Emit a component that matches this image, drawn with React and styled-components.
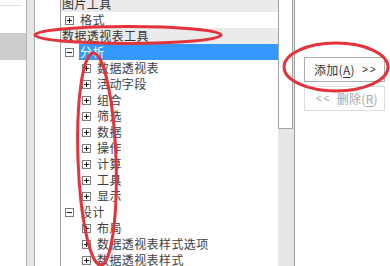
import styled, { createGlobalStyle } from 'styled-components';

const Global = createGlobalStyle`
  html, body {
    margin: 0;
    padding: 0;
    background: #ffffff;
  }
  body {
    font-family: "Noto Sans CJK SC", "Noto Sans", sans-serif;
    font-size: 12px;
  }
`;

const Page = styled.div`
  position: relative;
  width: 390px;
  height: 266px;
  overflow: hidden;
  display: flex;
  background: #fff;
`;

const LeftList = styled.div`
  width: 34px;
  height: 100%;
  display: flex;
  border-right: 1px solid #a9a9a9;
`;

const LeftItems = styled.div`
  width: 26px;
  display: flex;
  flex-direction: column;
`;

const LeftLine = styled.div`
  margin-top: 5px;
  width: 22px;
  height: 1px;
  background: #e2e2e2;
`;

const LeftSelected = styled.div`
  margin-top: 27px;
  height: 27px;
  background: #cccccc;
`;

const LeftScroll = styled.div`
  width: 7px;
  border-left: 1px solid #b4b4b4;
  background: #e6e6e6;
`;

const Gap = styled.div`
  width: 25px;
`;

const TreeBox = styled.div`
  width: 233px;
  height: 100%;
  display: flex;
  border-left: 1px solid #a0a0a0;
  border-right: 1px solid #a0a0a0;
`;

const Tree = styled.div`
  flex: 1;
  min-width: 0;
  margin-top: -4px;
  display: flex;
  flex-direction: column;
`;

const Row = styled.div`
  height: 16px;
  display: flex;
  align-items: center;
  padding-left: ${(p) => p.indent}px;
  background: ${(p) => (p.header ? '#ebebeb' : 'transparent')};
  color: ${(p) => (p.header ? '#333333' : '#404040')};
  white-space: nowrap;
  font-size: 12px;
  letter-spacing: 0.4px;
  line-height: 16px;
`;

const Label = styled.span`
  height: 16px;
  display: flex;
  align-items: center;
  padding-right: 4px;
  flex: ${(p) => (p.selected ? 1 : 'none')};
  background: ${(p) => (p.selected ? '#3399ff' : 'transparent')};
  color: ${(p) => (p.selected ? '#ffffff' : 'inherit')};
  padding-left: ${(p) => (p.selected ? 1 : 0)}px;
  margin-left: ${(p) => (p.selected ? -1 : 0)}px;
`;

const Toggle = styled.span`
  position: relative;
  width: 7px;
  height: 7px;
  border: 1px solid #7d7d7d;
  margin-right: 6px;
  flex: none;
  background: #fff;

  &::before {
    content: '';
    position: absolute;
    left: 1px;
    top: 3px;
    width: 5px;
    height: 1px;
    background: #1a1a1a;
  }

  &::after {
    content: '';
    display: ${(p) => (p.open ? 'none' : 'block')};
    position: absolute;
    left: 3px;
    top: 1px;
    width: 1px;
    height: 5px;
    background: #1a1a1a;
  }
`;

const Scrollbar = styled.div`
  width: 16px;
  display: flex;
  flex-direction: column;
  background: #e6e6e6;
`;

const Thumb = styled.div`
  height: 128px;
  margin: 0 1px 0 0;
  border: 1px solid #a5a5a5;
  border-top: none;
  background: #ffffff;
`;

const Side = styled.div`
  flex: 1;
  display: flex;
  flex-direction: column;
  gap: 4px;
  padding: 57px 0 0 9px;
`;

const Button = styled.div`
  height: 23px;
  display: flex;
  align-items: center;
  padding-left: ${(p) => p.pad}px;
  box-sizing: content-box;
  width: ${(p) => 79 - p.pad}px;
  border: 1px solid ${(p) => (p.disabled ? '#dcdcdc' : '#adadad')};
  background: ${(p) => (p.disabled ? '#ffffff' : '#fdfdfd')};
  color: ${(p) => (p.disabled ? '#a6a6a6' : '#333333')};
  font-size: 12px;
  letter-spacing: 0.3px;
  white-space: nowrap;
`;

const Key = styled.span`
  text-decoration: underline;
  text-underline-offset: 2px;
`;

const Arrows = styled.span`
  font-family: "Liberation Sans", sans-serif;
  font-size: 10px;
  letter-spacing: 2px;
  margin: ${(p) => (p.before ? '0 5px 0 0' : '0 0 0 7px')};
`;

const Marks = styled.svg`
  position: absolute;
  left: 0;
  top: 0;
  pointer-events: none;
`;

const rows = [
  { text: '图片工具', header: true, indent: 1 },
  { text: '格式', toggle: true, indent: 4 },
  { text: '数据透视表工具', header: true, indent: 1 },
  { text: '分析', toggle: true, open: true, selected: true, indent: 4 },
  { text: '数据透视表', toggle: true, indent: 21 },
  { text: '活动字段', toggle: true, indent: 21 },
  { text: '组合', toggle: true, indent: 21 },
  { text: '筛选', toggle: true, indent: 21 },
  { text: '数据', toggle: true, indent: 21 },
  { text: '操作', toggle: true, indent: 21 },
  { text: '计算', toggle: true, indent: 21 },
  { text: '工具', toggle: true, indent: 21 },
  { text: '显示', toggle: true, indent: 21 },
  { text: '设计', toggle: true, open: true, indent: 4 },
  { text: '布局', toggle: true, indent: 21 },
  { text: '数据透视表样式选项', toggle: true, indent: 21 },
  { text: '数据透视表样式', toggle: true, indent: 21 },
];

export default function App() {
  return (
    <>
      <Global />
      <Page>
        <LeftList>
          <LeftItems>
            <LeftLine />
            <LeftSelected />
          </LeftItems>
          <LeftScroll />
        </LeftList>
        <Gap />
        <TreeBox>
          <Tree>
            {rows.map((r) => (
              <Row key={r.text} header={r.header} indent={r.indent}>
                {r.toggle && <Toggle open={r.open} />}
                <Label selected={r.selected}>{r.text}</Label>
              </Row>
            ))}
          </Tree>
          <Scrollbar>
            <Thumb />
          </Scrollbar>
        </TreeBox>
        <Side>
          <Button pad={9}>
            添加(<Key>A</Key>)<Arrows>&gt;&gt;</Arrows>
          </Button>
          <Button pad={11} disabled>
            <Arrows before>&lt;&lt;</Arrows>删除(<Key>R</Key>)
          </Button>
        </Side>
        <Marks width="390" height="266" viewBox="0 0 390 266">
          <g fill="none" stroke="#e3343b" strokeWidth="3">
            <ellipse cx="128" cy="35" rx="93" ry="8.5" />
            <ellipse cx="97" cy="159" rx="19" ry="106" transform="rotate(-2 97 159)" />
            <ellipse cx="336" cy="67" rx="52" ry="24" />
          </g>
        </Marks>
      </Page>
    </>
  );
}
